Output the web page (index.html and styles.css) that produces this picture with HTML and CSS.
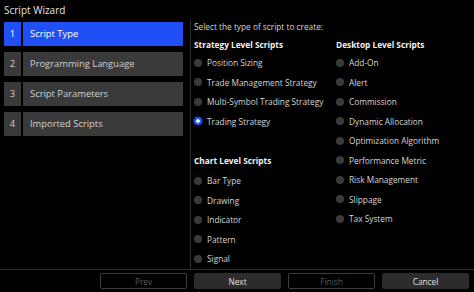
FILE: index.html
```html
<!DOCTYPE html>
<html lang="en">
<head>
  <meta charset="UTF-8" />
  <title>Script Wizard</title>
  <link rel="stylesheet" href="styles.css">
</head>
<body>
  <div class="wizard">
    <div class="title">Script Wizard</div>

    <div class="main">
      <div class="steps">
        <div class="step active"><span class="num">1</span><span class="label">Script Type</span></div>
        <div class="step"><span class="num">2</span><span class="label">Programming Language</span></div>
        <div class="step"><span class="num">3</span><span class="label">Script Parameters</span></div>
        <div class="step"><span class="num">4</span><span class="label">Imported Scripts</span></div>
      </div>

      <div class="content">
        <div class="intro">Select the type of script to create:</div>
        <div class="columns">
          <div class="col">
            <div class="group-title">Strategy Level Scripts</div>
            <div class="option"><span class="radio"></span>Position Sizing</div>
            <div class="option"><span class="radio"></span>Trade Management Strategy</div>
            <div class="option"><span class="radio"></span>Multi-Symbol Trading Strategy</div>
            <div class="option"><span class="radio checked"></span>Trading Strategy</div>

            <div class="group-title second">Chart Level Scripts</div>
            <div class="option"><span class="radio"></span>Bar Type</div>
            <div class="option"><span class="radio"></span>Drawing</div>
            <div class="option"><span class="radio"></span>Indicator</div>
            <div class="option"><span class="radio"></span>Pattern</div>
            <div class="option"><span class="radio"></span>Signal</div>
          </div>
          <div class="col">
            <div class="group-title">Desktop Level Scripts</div>
            <div class="option"><span class="radio"></span>Add-On</div>
            <div class="option"><span class="radio"></span>Alert</div>
            <div class="option"><span class="radio"></span>Commission</div>
            <div class="option"><span class="radio"></span>Dynamic Allocation</div>
            <div class="option"><span class="radio"></span>Optimization Algorithm</div>
            <div class="option"><span class="radio"></span>Performance Metric</div>
            <div class="option"><span class="radio"></span>Risk Management</div>
            <div class="option"><span class="radio"></span>Slippage</div>
            <div class="option"><span class="radio"></span>Tax System</div>
          </div>
        </div>
      </div>
    </div>

    <div class="footer">
      <button class="btn" disabled>Prev</button>
      <button class="btn">Next</button>
      <button class="btn" disabled>Finish</button>
      <button class="btn">Cancel</button>
    </div>
  </div>
</body>
</html>
```

FILE: styles.css
```css
body {
  margin: 0;
  background: #000;
  color: #d6d6d6;
  font-family: 'Open Sans', 'Noto Sans', sans-serif;
}
.wizard {
  width: 474px;
  height: 292px;
  display: flex;
  flex-direction: column;
}
.title {
  height: 20px;
  line-height: 20px;
  padding-left: 4px;
  font-size: 10px;
  color: #e4e4e4;
}
.main {
  flex: 1;
  display: flex;
}
.steps {
  width: 179px;
  padding: 2px 0 0 4px;
  margin-right: 7px;
}
.step {
  display: flex;
  height: 24px;
  margin-bottom: 6px;
  font-size: 9.4px;
  line-height: 24px;
  color: #d0d0d0;
}
.step .num {
  width: 17px;
  margin-right: 2px;
  text-align: center;
  background: #3a3a3a;
}
.step .label {
  flex: 1;
  padding-left: 7px;
  background: #3a3a3a;
}
.step.active .num,
.step.active .label {
  background: #1f4ff5;
  color: #fff;
}
.content {
  flex: 1;
  border-left: 1px solid #2e2e2e;
  padding-left: 3px;
  font-size: 8.3px;
}
.intro {
  height: 14px;
  line-height: 14px;
  margin-bottom: 1px;
}
.columns {
  display: grid;
  grid-template-columns: 142px auto;
}
.group-title {
  height: 14px;
  line-height: 14px;
  margin-top: 3px;
  margin-bottom: 1px;
  font-weight: bold;
  color: #f2f2f2;
}
.group-title.second {
  height: 20px;
  line-height: 20px;
  margin-top: 20px;
  margin-bottom: 0;
}
.option {
  display: flex;
  align-items: center;
  height: 19.5px;
}
.radio {
  width: 8px;
  height: 8px;
  margin-right: 5px;
  border-radius: 50%;
  background: #3a3a3a;
  flex: none;
}
.radio.checked {
  background: radial-gradient(circle, #fff 0 1.5px, #2456ff 2px);
  box-shadow: 0 0 2px #2456ff;
}
.footer {
  height: 22px;
  border-top: 1px solid #2e2e2e;
  display: flex;
  justify-content: flex-end;
  align-items: center;
  gap: 7px;
  padding-right: 5px;
}
.btn {
  width: 87px;
  height: 16px;
  padding: 0;
  border: 1px solid #2c2c2c;
  border-radius: 2px;
  background: #2c2c2c;
  color: #e0e0e0;
  font-family: 'Open Sans', 'Noto Sans', sans-serif;
  font-size: 8.3px;
}
.btn:disabled {
  background: #000;
  border-color: #3c3c3c;
  color: #5a5a5a;
}
```
